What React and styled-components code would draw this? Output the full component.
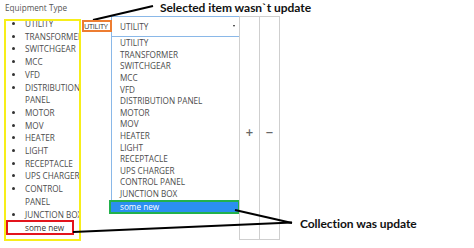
import React from 'react'
import styled, { createGlobalStyle } from 'styled-components'

const GlobalStyle = createGlobalStyle`
  html, body {
    margin: 0;
    padding: 0;
    background: #fff;
  }
  body {
    font-family: "Open Sans", "Noto Sans", sans-serif;
    color: #555;
  }
`

const equipment = [
  'UTILITY',
  'TRANSFORMER',
  'SWITCHGEAR',
  'MCC',
  'VFD',
  'DISTRIBUTION PANEL',
  'MOTOR',
  'MOV',
  'HEATER',
  'LIGHT',
  'RECEPTACLE',
  'UPS CHARGER',
  'CONTROL PANEL',
  'JUNCTION BOX',
]

const Page = styled.div`
  position: relative;
  width: 474px;
  height: 248px;
  overflow: hidden;
`

const FieldLabel = styled.div`
  height: 18px;
  padding-left: 5px;
  font-size: 8.2px;
  line-height: 16px;
  color: #555;
`

const Row = styled.div`
  display: flex;
  align-items: flex-start;
`

const ListPanel = styled.div`
  box-sizing: border-box;
  width: 77px;
  height: 222px;
  margin: 1px 0 0 4px;
  border: 2px solid #f7ee1a;
  overflow: hidden;
`

const BulletList = styled.ul`
  width: 58px;
  margin: -3px 0 0;
  padding-left: 19px;
  list-style: disc;
  font-size: 8.2px;
  line-height: 12.7px;
  color: #4d4d4d;
`

const BulletItem = styled.li`
  white-space: ${({ $nowrap }) => ($nowrap ? 'nowrap' : 'normal')};

  &::marker {
    color: #333;
  }

  ${({ $marked }) => $marked && `
    outline: 2px solid #e3141c;
    margin-left: -17px;
    padding-left: 17px;
    width: 47px;
    margin-top: 1px;
    line-height: 11px;
    color: #333;
  `}
`

const ValueTag = styled.div`
  box-sizing: border-box;
  width: 30px;
  height: 12px;
  margin: 2px -1px 0 1px;
  border: 2px solid #ed7d31;
  font-size: 7.4px;
  line-height: 8px;
  letter-spacing: -0.3px;
  color: #333;
  overflow: hidden;
  white-space: nowrap;
  position: relative;
  z-index: 1;
`

const SelectGroup = styled.div`
  display: flex;
  height: 224px;
  margin-top: -2px;
`

const SelectColumn = styled.div`
  width: 129px;
  display: flex;
  flex-direction: column;
`

const SelectBox = styled.div`
  box-sizing: border-box;
  height: 21px;
  border: 1px solid #8ab8e8;
  display: flex;
  align-items: center;
  justify-content: space-between;
  padding: 0 4px 0 8px;
  font-size: 8.2px;
  color: #4d4d4d;
`

const Caret = styled.span`
  width: 0;
  height: 0;
  border-left: 1.5px solid transparent;
  border-right: 1.5px solid transparent;
  border-top: 2.5px solid #222;
  margin-top: -1px;
`

const OptionList = styled.div`
  box-sizing: border-box;
  margin-top: -1px;
  border: 1px solid #8ab8e8;
  border-bottom: none;
  padding-top: 0.2px;
  font-size: 8.2px;
  color: #4d4d4d;
`

const Option = styled.div`
  height: 11.6px;
  line-height: 11.6px;
  padding-left: 8px;
  white-space: nowrap;
`

const ActiveOption = styled.div`
  box-sizing: border-box;
  height: 14px;
  margin: 0 -1px 0 -3px;
  padding-left: 9px;
  border: 2px solid #22b14c;
  background: #2b8ff0;
  color: #fff;
  line-height: 10px;
  white-space: nowrap;
`

const StepButton = styled.div`
  box-sizing: border-box;
  width: 21px;
  margin-left: -1px;
  padding-top: 9px;
  border: 1px solid #cfcfcf;
  display: flex;
  align-items: center;
  justify-content: center;
  font-size: 10px;
  font-weight: 700;
  color: #666;
  font-family: "DejaVu Sans", sans-serif;
`

const Callout = styled.div`
  position: absolute;
  left: ${({ $x }) => $x}px;
  top: ${({ $y }) => $y}px;
  font-family: "Lato", "Liberation Sans", sans-serif;
  font-weight: 700;
  font-size: 12px;
  letter-spacing: -0.05px;
  color: #111;
  white-space: nowrap;
`

const Overlay = styled.svg`
  position: absolute;
  left: 0;
  top: 0;
  pointer-events: none;
`

export default function App() {
  return (
    <>
      <GlobalStyle />
      <Page>
        <FieldLabel>Equipment Type</FieldLabel>
        <Row>
          <ListPanel>
            <BulletList>
              {equipment.map((name) => (
                <BulletItem key={name} $nowrap={name === 'JUNCTION BOX'}>
                  {name}
                </BulletItem>
              ))}
              <BulletItem $marked>some new</BulletItem>
            </BulletList>
          </ListPanel>
          <ValueTag>UTILITY</ValueTag>
          <SelectGroup>
            <SelectColumn>
              <SelectBox>
                <span>UTILITY</span>
                <Caret />
              </SelectBox>
              <OptionList>
                {equipment.map((name) => (
                  <Option key={name}>{name}</Option>
                ))}
                <ActiveOption>some new</ActiveOption>
              </OptionList>
            </SelectColumn>
            <StepButton>+</StepButton>
            <StepButton>−</StepButton>
          </SelectGroup>
        </Row>
        <Overlay width="474" height="248" viewBox="0 0 474 248">
          <line x1="93" y1="20" x2="153" y2="6" stroke="#000" strokeWidth="2" />
          <line x1="235" y1="210" x2="292" y2="223" stroke="#000" strokeWidth="2" />
          <line x1="73" y1="232" x2="292" y2="222.5" stroke="#000" strokeWidth="2" />
        </Overlay>
        <Callout $x={160} $y={0}>Selected item wasn`t update</Callout>
        <Callout $x={300} $y={216}>Collection was update</Callout>
      </Page>
    </>
  )
}
